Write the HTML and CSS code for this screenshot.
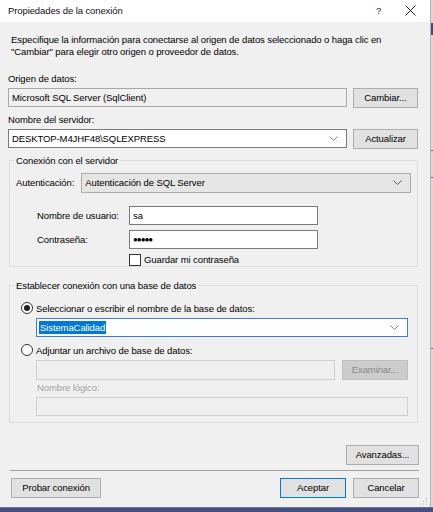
FILE: index.html
```html
<!DOCTYPE html>
<html>
  <head>
    <meta charset="utf-8">
    <title>Propiedades de la conexión</title>
    <link rel="stylesheet" href="styles.css">
  </head>

  <body>
    <div class="screen">
      <div class="dialog">
        <!-- title bar -->
        <div class="titlebar">
          <span class="title">Propiedades de la conexión</span>
          <span class="tb-help">?</span>
          <span class="tb-close">
            <svg width="11" height="11" viewBox="0 0 11 11"><path d="M0.5 0.5 L10.5 10.5 M10.5 0.5 L0.5 10.5" stroke="#222" stroke-width="1" fill="none"/></svg>
          </span>
        </div>

        <div class="body">
          <p class="intro">
            Especifique la información para conectarse al origen de datos seleccionado o haga clic en<br>
            "Cambiar" para elegir otro origen o proveedor de datos.
          </p>

          <!-- data source -->
          <div class="label">Origen de datos:</div>
          <div class="row">
            <div class="field readonly wide">Microsoft SQL Server (SqlClient)</div>
            <button class="btn side">Cambiar...</button>
          </div>

          <div class="label">Nombre del servidor:</div>
          <div class="row">
            <div class="field combo wide">
              <span>DESKTOP-M4JHF48\SQLEXPRESS</span>
              <svg class="chev" width="9" height="5" viewBox="0 0 9 5"><path d="M0.5 0.5 L4.5 4.5 L8.5 0.5" stroke="#888" fill="none"/></svg>
            </div>
            <button class="btn side">Actualizar</button>
          </div>

          <!-- server logon -->
          <fieldset class="group server">
            <legend>Conexión con el servidor</legend>
            <div class="auth-row">
              <span>Autenticación:</span>
              <div class="field dropdown">
                <span>Autenticación de SQL Server</span>
                <svg class="chev" width="9" height="5" viewBox="0 0 9 5"><path d="M0.5 0.5 L4.5 4.5 L8.5 0.5" stroke="#555" fill="none"/></svg>
              </div>
            </div>
            <div class="cred">
              <span>Nombre de usuario:</span>
              <div class="field cred-input">sa</div>
              <span>Contraseña:</span>
              <div class="field cred-input dots">●●●●●</div>
              <span></span>
              <label class="check"><span class="box"></span>Guardar mi contraseña</label>
            </div>
          </fieldset>

          <!-- database -->
          <fieldset class="group database">
            <legend>Establecer conexión con una base de datos</legend>
            <div class="radio-row"><span class="radio on"></span>Seleccionar o escribir el nombre de la base de datos:</div>
            <div class="field combo db focus">
              <span class="sel">SistemaCalidad</span>
              <svg class="chev" width="9" height="5" viewBox="0 0 9 5"><path d="M0.5 0.5 L4.5 4.5 L8.5 0.5" stroke="#888" fill="none"/></svg>
            </div>
            <div class="radio-row second"><span class="radio"></span>Adjuntar un archivo de base de datos:</div>
            <div class="file-row">
              <div class="field disabled file"></div>
              <button class="btn disabled-btn">Examinar...</button>
            </div>
            <div class="label muted">Nombre lógico:</div>
            <div class="field disabled logical"></div>
          </fieldset>

          <div class="adv-row">
            <button class="btn adv">Avanzadas...</button>
          </div>
          <hr class="sep">

          <div class="footer">
            <button class="btn test">Probar conexión</button>
            <span class="spacer"></span>
            <button class="btn ok">Aceptar</button>
            <button class="btn cancel">Cancelar</button>
          </div>
        </div>

        <!-- size grip -->
        <svg class="grip" width="8" height="8" viewBox="0 0 8 8">
          <rect x="6" y="0" width="1" height="1" fill="#b0b0b0"/>
          <rect x="3" y="3" width="1" height="1" fill="#b0b0b0"/>
          <rect x="6" y="3" width="1" height="1" fill="#b0b0b0"/>
          <rect x="0" y="6" width="1" height="1" fill="#b0b0b0"/>
          <rect x="3" y="6" width="1" height="1" fill="#b0b0b0"/>
          <rect x="6" y="6" width="1" height="1" fill="#b0b0b0"/>
        </svg>
      </div>
      <div class="backdrop">
        <span class="bd-blue"></span>
        <span class="bd-tick t1"></span>
        <span class="bd-tick t2"></span>
        <span class="bd-tick t3"></span>
      </div>
    </div>
    <div class="taskbar"></div>
  </body>
</html>
```

FILE: styles.css
```css
html, body {
  margin: 0;
  padding: 0;
  width: 433px;
  height: 512px;
  overflow: hidden;
  font-family: "Liberation Sans", Arial, sans-serif;
  font-size: 9.5px;
  letter-spacing: -0.1px;
  color: #000;
  background: #3f4b7a;
  white-space: nowrap;
}

.screen {
  display: flex;
  height: 507px;
}

.dialog {
  width: 430px;
  background: #f0f0f0;
  display: flex;
  flex-direction: column;
}

.backdrop {
  flex: 1;
  background: #d9d9d9;
  border-left: 1px solid #b5b5b5;
  display: flex;
  flex-direction: column;
}
.bd-blue {
  display: block;
  margin-top: 23px;
  height: 12px;
  background: #3c4a7c;
}
.bd-tick {
  display: block;
  height: 1px;
  background: #5a6a99;
}
.t1 { margin-top: 115px; }
.t2 { margin-top: 26px; }
.t3 { margin-top: 170px; }

.taskbar {
  height: 5px;
  background: #45507c;
  border-top: 1px solid #6a7399;
}

/* title bar */
.titlebar {
  height: 23px;
  background: #fff;
  display: flex;
  align-items: center;
  padding-left: 8px;
  font-size: 9.5px;
}
.title {
  flex: 1;
  color: #111;
}
.tb-help {
  width: 29px;
  color: #222;
}
.tb-close {
  width: 25px;
  display: flex;
}

.body {
  padding: 11px 11px 0 8px;
}

.intro {
  margin: 0 0 0 3px;
  line-height: 12px;
  height: 39px;
  padding-top: 1px;
  box-sizing: border-box;
}

.label {
  line-height: 14px;
  height: 16px;
}
.muted { color: #a0a0a0; }

.row {
  display: flex;
  gap: 6px;
  height: 24px;
  margin-bottom: 1px;
}

.field {
  box-sizing: border-box;
  height: 19px;
  border: 1px solid #7a7a7a;
  background: #fff;
  line-height: 17px;
  padding: 0 3px;
  display: flex;
  align-items: center;
}
.field > span { flex: 1; }
.wide { width: 339px; }
.readonly {
  background: #f0f0f0;
  border-color: #a8a8a8;
}
.chev { margin-right: 5px; }

.btn {
  box-sizing: border-box;
  height: 20px;
  border: 1px solid #adadad;
  background: #e1e1e1;
  font: inherit;
  letter-spacing: inherit;
  color: #000;
  padding: 0;
}
.side {
  width: 65px;
}

/* group boxes */
.group {
  margin: 0 1px 0 1px;
  border: 1px solid #dcdcdc;
  padding: 0;
}
.group legend {
  padding: 0 2px;
  margin-left: 4px;
  line-height: 12px;
}
.server {
  height: 112px;
  margin-top: 2px;
  box-sizing: border-box;
}
.auth-row {
  display: flex;
  align-items: center;
  gap: 7px;
  padding: 6px 6px 0 6px;
}
.dropdown {
  flex: 1;
  height: 20px;
  background: #e5e5e5;
  border-color: #adadad;
}

.cred {
  display: grid;
  grid-template-columns: 92px 189px;
  align-items: center;
  row-gap: 5px;
  padding: 13px 0 0 27px;
}
.cred-input { width: 189px; }
.dots {
  font-size: 8px;
  letter-spacing: -1px;
}
.check {
  display: flex;
  align-items: center;
  gap: 3px;
}
.box {
  display: inline-block;
  box-sizing: border-box;
  width: 12px;
  height: 12px;
  border: 1px solid #333;
  background: #fff;
}

.database {
  margin-top: 13px;
  height: 143px;
  box-sizing: border-box;
}
.radio-row {
  display: flex;
  align-items: center;
  gap: 3px;
  padding: 8px 0 0 11px;
  height: 17px;
}
.radio-row.second { padding-top: 5px; }
.radio {
  display: inline-block;
  box-sizing: border-box;
  width: 12px;
  height: 12px;
  border: 1px solid #333;
  border-radius: 50%;
  background: #fff;
  position: relative;
}
.radio.on::after {
  content: "";
  position: absolute;
  left: 2px;
  top: 2px;
  width: 6px;
  height: 6px;
  border-radius: 50%;
  background: #222;
}
.db {
  margin: 1px 0 0 26px;
  width: 372px;
  padding-left: 2px;
}
.focus { border-color: #3c7fd1; }
.sel {
  flex: 0 0 auto !important;
  background: #0078d7;
  color: #fff;
  padding: 0 1px;
  line-height: 13px;
  margin-right: auto;
}

.file-row {
  display: flex;
  gap: 7px;
  margin: 1px 0 0 26px;
}
.disabled {
  background: #f0f0f0;
  border-color: #d0d0d0;
}
.file { width: 299px; height: 20px; }
.disabled-btn {
  width: 66px;
  background: #cccccc;
  border-color: #bfbfbf;
  color: #8a8a8a;
}
.database .label.muted {
  margin: 1px 0 0 27px;
}
.logical {
  margin: 0 0 0 26px;
  width: 372px;
  height: 19px;
}

.adv-row {
  display: flex;
  justify-content: flex-end;
  margin-top: 22px;
}
.adv { width: 73px; }

.sep {
  border: 0;
  border-top: 1px solid #a0a0a0;
  margin: 5px 0 0 2px;
}

.footer {
  display: flex;
  gap: 7px;
  margin-top: 7px;
  padding-left: 3px;
}
.spacer { flex: 1; }
.test { width: 90px; }
.ok {
  width: 66px;
  border-color: #0078d7;
}
.cancel { width: 66px; }

.grip {
  align-self: flex-end;
  margin: auto 2px 2px 0;
}
```
